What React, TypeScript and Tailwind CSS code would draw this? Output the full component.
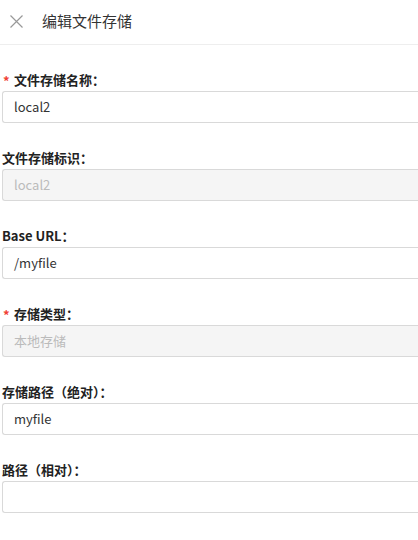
import React from 'react';

interface Field {
  label: string;
  value: string;
  required?: boolean;
  disabled?: boolean;
}

const fields: Field[] = [
  { label: '文件存储名称：', value: 'local2', required: true },
  { label: '文件存储标识：', value: 'local2', disabled: true },
  { label: 'Base URL：', value: '/myfile' },
  { label: '存储类型：', value: '本地存储', required: true, disabled: true },
  { label: '存储路径（绝对）：', value: 'myfile' },
  { label: '路径（相对）：', value: '' },
];

const font = { fontFamily: '"Noto Sans CJK SC", "Liberation Sans", sans-serif' };

export default function App() {
  return (
    <div className="w-[418px] h-[540px] overflow-hidden bg-white text-[#333]" style={font}>
      <div className="h-[45px] flex items-center border-b border-[#eee]">
        <svg className="ml-[10px] w-[13px] h-[13px] -mt-[2px]" viewBox="0 0 13 13" fill="none" stroke="#999" strokeWidth="1.2">
          <path d="M0.5 0.5 L12.5 12.5 M12.5 0.5 L0.5 12.5" />
        </svg>
        <span className="ml-[19px] text-[15px] -mt-[1px]">编辑文件存储</span>
      </div>

      <div className="pt-[24px] pl-[2px]">
        {fields.map(f => (
          <div key={f.label} className="mb-[24px]">
            <div className="h-[22px] flex items-center text-[13px] font-bold text-[#222]">
              {f.required && <span className="text-[#f04134] text-[13px] font-bold w-[12px] pl-[1px] mt-[2px]">*</span>}
              <span>{f.label}</span>
            </div>
            <div
              className={`h-[32px] border border-r-0 border-[#d9d9d9] rounded-l-[3px] flex items-center pl-[11px] text-[13px] ${
                f.disabled ? 'bg-[#f5f5f5] text-[#bbb]' : 'bg-white text-[#333]'
              }`}
            >
              {f.value}
            </div>
          </div>
        ))}
      </div>
    </div>
  );
}
